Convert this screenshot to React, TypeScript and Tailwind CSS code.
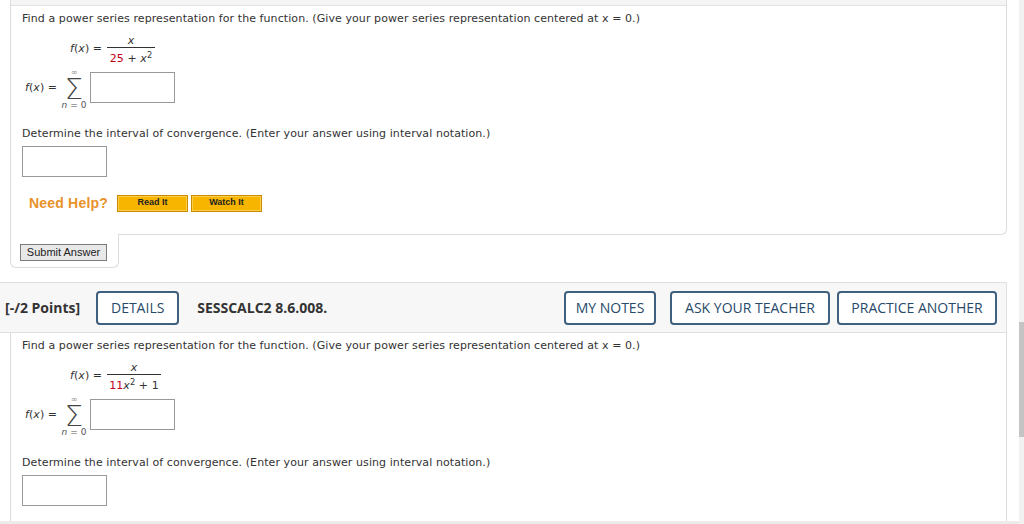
import React from "react";

const body = "font-['DejaVu_Sans',Verdana,sans-serif]";

function Fraction({ num, den, w }: { num: React.ReactNode; den: React.ReactNode; w: string }) {
  return (
    <div className={`flex flex-col items-center ${w}`}>
      <div className="h-[13px] leading-[13px] text-[11px]">{num}</div>
      <div className="w-full border-t border-[#333]" />
      <div className="h-[14px] leading-[21px] text-[11px] whitespace-nowrap">{den}</div>
    </div>
  );
}

function SumRow() {
  return (
    <div className="flex items-start h-[40px]">
      <div className="ml-[3px] mt-[13px] text-[11px] leading-[12px] w-[36px] whitespace-nowrap">
        <i>f</i>(<i>x</i>) =
      </div>
      <div className="flex flex-col items-center w-[26px]">
        <div className="text-[8px] leading-[8px] h-[10px] text-[#999]">∞</div>
        <div className="text-[29px] leading-[20px] h-[20px] text-[#444] font-light">Σ</div>
        <div className="mt-[1px] text-[9px] leading-[10px] h-[10px] text-[#555] whitespace-nowrap">
          <i>n</i> = 0
        </div>
      </div>
      <div className="ml-[3px] mt-[3px] w-[85px] h-[31px] border border-[#999] bg-white" />
    </div>
  );
}

function Question({ den, lineW, detMt }: { den: React.ReactNode; lineW: string; detMt: string }) {
  return (
    <div className={`${body} text-[#333] pl-[11px] tracking-[0.08px]`}>
      <div className="mt-[6px] h-[14px] leading-[14px] text-[11px] whitespace-nowrap">
        Find a power series representation for the function. (Give your power series representation centered at x = 0.)
      </div>
      <div className="mt-[8px] flex items-center ml-[48px] h-[28px]">
        <div className="text-[11px] leading-[12px] w-[37px] mt-[1px] whitespace-nowrap">
          <i>f</i>(<i>x</i>) =
        </div>
        <Fraction num={<i>x</i>} den={den} w={lineW} />
      </div>
      <div className="mt-[7px]">
        <SumRow />
      </div>
      <div className={`${detMt} h-[14px] leading-[14px] text-[11px] whitespace-nowrap`}>
        Determine the interval of convergence. (Enter your answer using interval notation.)
      </div>
      <div className="mt-[5px] w-[85px] h-[31px] border border-[#999] bg-white" />
    </div>
  );
}

function OutlineBtn({ label, w }: { label: string; w: string }) {
  return (
    <div
      className={`${w} h-[34px] flex items-center justify-center border-2 border-[#3f607e] rounded-[4px] bg-white text-[14px] font-medium text-[#284a6a] font-['Open_Sans',sans-serif] whitespace-nowrap`}
    >
      {label}
    </div>
  );
}

export default function App() {
  return (
    <div className="w-[1024px] h-[524px] overflow-hidden bg-white flex">
      <div className="w-[1019px] flex flex-col">
        {/* Panel 1 */}
        <div className="ml-[10px] w-[997px]">
          <div className="h-[235px] border-l border-r border-b border-[#dcdcdc] rounded-br-[6px] flex flex-col">
            <div className="h-[6px] bg-[#f5f5f5] border-b border-[#e2e2e2]" />
            <Question
              den={
                <span>
                  <span className="text-[#c0001a]">25</span> + <i>x</i>
                  <sup>2</sup>
                </span>
              }
              lineW="w-[48px]"
              detMt="mt-[18px]"
            />
            <div className="mt-[18px] flex items-center h-[16px] pl-[18px]">
              <span className="font-['Liberation_Sans',Arial,sans-serif] font-bold text-[14px] leading-[16px] text-[#e8922a] mr-[9px] tracking-[0.2px]">
                Need Help?
              </span>
              <div className="w-[71px] h-[17px] flex items-center justify-center bg-[#f7b500] border border-[#c98a00] shadow-[inset_0_0_0_1px_#fccf4a] font-['Liberation_Sans',Arial,sans-serif] font-bold text-[9px] text-[#222]">
                Read It
              </div>
              <div className="ml-[3px] w-[71px] h-[17px] flex items-center justify-center bg-[#f7b500] border border-[#c98a00] shadow-[inset_0_0_0_1px_#fccf4a] font-['Liberation_Sans',Arial,sans-serif] font-bold text-[9px] text-[#222]">
                Watch It
              </div>
            </div>
          </div>
          <div className="-mt-px w-[109px] h-[34px] bg-white border-l border-r border-b border-[#dcdcdc] rounded-b-[6px] pl-[9px] pt-[10px]">
            <div className="w-[87px] h-[17px] flex items-center justify-center bg-[#e8e8e8] border border-[#7c7c7c] font-['Liberation_Sans',Arial,sans-serif] text-[11px] text-[#222] whitespace-nowrap">
              Submit Answer
            </div>
          </div>
        </div>

        {/* Header 2 */}
        <div className="mt-[14px] w-[1007px] h-[51px] bg-[#f7f7f7] border-t border-b border-r border-[#e0e0e0] flex items-center font-['Open_Sans',sans-serif]">
          <span className="pl-[5px] font-bold text-[14px] text-[#333] whitespace-nowrap">[-/2 Points]</span>
          <div className="ml-[16px]">
            <OutlineBtn label="DETAILS" w="w-[83px]" />
          </div>
          <span className="ml-[18px] font-bold text-[14px] text-[#333] whitespace-nowrap">SESSCALC2 8.6.008.</span>
          <div className="ml-auto flex items-center mr-[9px]">
            <OutlineBtn label="MY NOTES" w="w-[92px]" />
            <div className="ml-[14px]">
              <OutlineBtn label="ASK YOUR TEACHER" w="w-[160px]" />
            </div>
            <div className="ml-[7px]">
              <OutlineBtn label="PRACTICE ANOTHER" w="w-[160px]" />
            </div>
          </div>
        </div>

        {/* Panel 2 */}
        <div className="ml-[10px] w-[997px] flex-1 border-l border-r border-[#dcdcdc]">
          <Question
            den={
              <span>
                <span className="text-[#c0001a]">11</span>
                <i>x</i>
                <sup>2</sup> + 1
              </span>
            }
            lineW="w-[54px]"
            detMt="mt-[20px]"
          />
        </div>
        <div className="h-[3px] bg-[#ececec]" />
      </div>
      {/* Scrollbar */}
      <div className="w-[5px] h-full bg-[#f1f1f1] flex flex-col">
        <div className="h-[322px]" />
        <div className="h-[115px] bg-[#c4c4c4]" />
      </div>
    </div>
  );
}
